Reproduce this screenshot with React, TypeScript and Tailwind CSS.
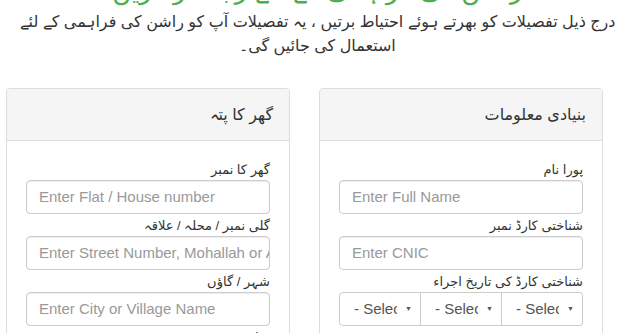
import React from "react";

const FONT = "font-['Liberation_Sans','DejaVu_Sans',Arial,sans-serif]";

function Field({ label, placeholder }: { label: string; placeholder: string }) {
  return (
    <div className="mb-[2px]">
      <div className="h-[20px] text-right text-[13px] leading-[20px] text-[#333]">{label}</div>
      <div className="h-[34px] rounded-[4px] border border-[#ccc] bg-white px-[12px] flex items-center overflow-hidden whitespace-nowrap text-[15px] text-[#999] shadow-[inset_0_1px_1px_rgba(0,0,0,0.075)]">
        {placeholder}
      </div>
    </div>
  );
}

function SelectBox({ pos }: { pos: "first" | "mid" | "last" }) {
  const round =
    pos === "first" ? "rounded-l-[4px]" : pos === "last" ? "rounded-r-[4px] border-l-0" : "border-l-0";
  return (
    <div
      className={`flex-1 h-[34px] border border-[#ccc] bg-white flex items-center pl-[14px] pr-[8px] text-[15px] text-[#555] ${round}`}
    >
      <span className="w-[43px] overflow-hidden whitespace-nowrap">- Select -</span>
      <span className="ml-auto text-[7px] text-[#555]">▼</span>
    </div>
  );
}

function Panel({ title, children }: { title: string; children: React.ReactNode }) {
  return (
    <div className="w-[284px] shrink-0 rounded-[4px] border border-[#ddd] bg-white">
      <div className="h-[52px] bg-[#f5f5f5] border-b border-[#ddd] rounded-t-[4px] px-[16px] flex items-center justify-end text-[16px] text-[#333]">
        {title}
      </div>
      <div className="px-[19px] pt-[19px] pb-[15px]">{children}</div>
    </div>
  );
}

export default function App() {
  return (
    <div className={`w-[635px] h-[333px] overflow-hidden bg-white ${FONT}`}>
      {/* heading is scrolled mostly out of view */}
      <div className="h-[10px] overflow-hidden">
        <div className="-mt-[30px] h-[40px] whitespace-nowrap text-center text-[26px] leading-[40px] text-[#4cae4c]" dir="rtl">
          راشن کی فراہمی کے لئے رجسٹر کریں
        </div>
      </div>
      <p className="h-[48px] text-center text-[16px] leading-[24px] text-[#333] whitespace-nowrap" dir="rtl">
        درج ذیل تفصیلات کو بھرتے ہوئے احتیاط برتیں ، یہ تفصیلات آپ کو راشن کی فراہمی کے لئے
        <br />
        استعمال کی جائیں گی۔
      </p>

      <div className="mt-[30px] flex gap-[29px] pl-[6px]">
        <Panel title="گھر کا پتہ">
          <Field label="گھر کا نمبر" placeholder="Enter Flat / House number" />
          <Field label="گلی نمبر / محلہ / علاقہ" placeholder="Enter Street Number, Mohallah or Area" />
          <Field label="شہر / گاؤں" placeholder="Enter City or Village Name" />
          <div className="h-[20px] text-right text-[13px] leading-[20px] text-[#333]">ضلع</div>
        </Panel>
        <Panel title="بنیادی معلومات">
          <Field label="پورا نام" placeholder="Enter Full Name" />
          <Field label="شناختی کارڈ نمبر" placeholder="Enter CNIC" />
          <div>
            <div className="h-[20px] text-right text-[13px] leading-[20px] text-[#333]">شناختی کارڈ کی تاریخ اجراء</div>
            <div className="flex">
              <SelectBox pos="first" />
              <SelectBox pos="mid" />
              <SelectBox pos="last" />
            </div>
          </div>
        </Panel>
      </div>
    </div>
  );
}
